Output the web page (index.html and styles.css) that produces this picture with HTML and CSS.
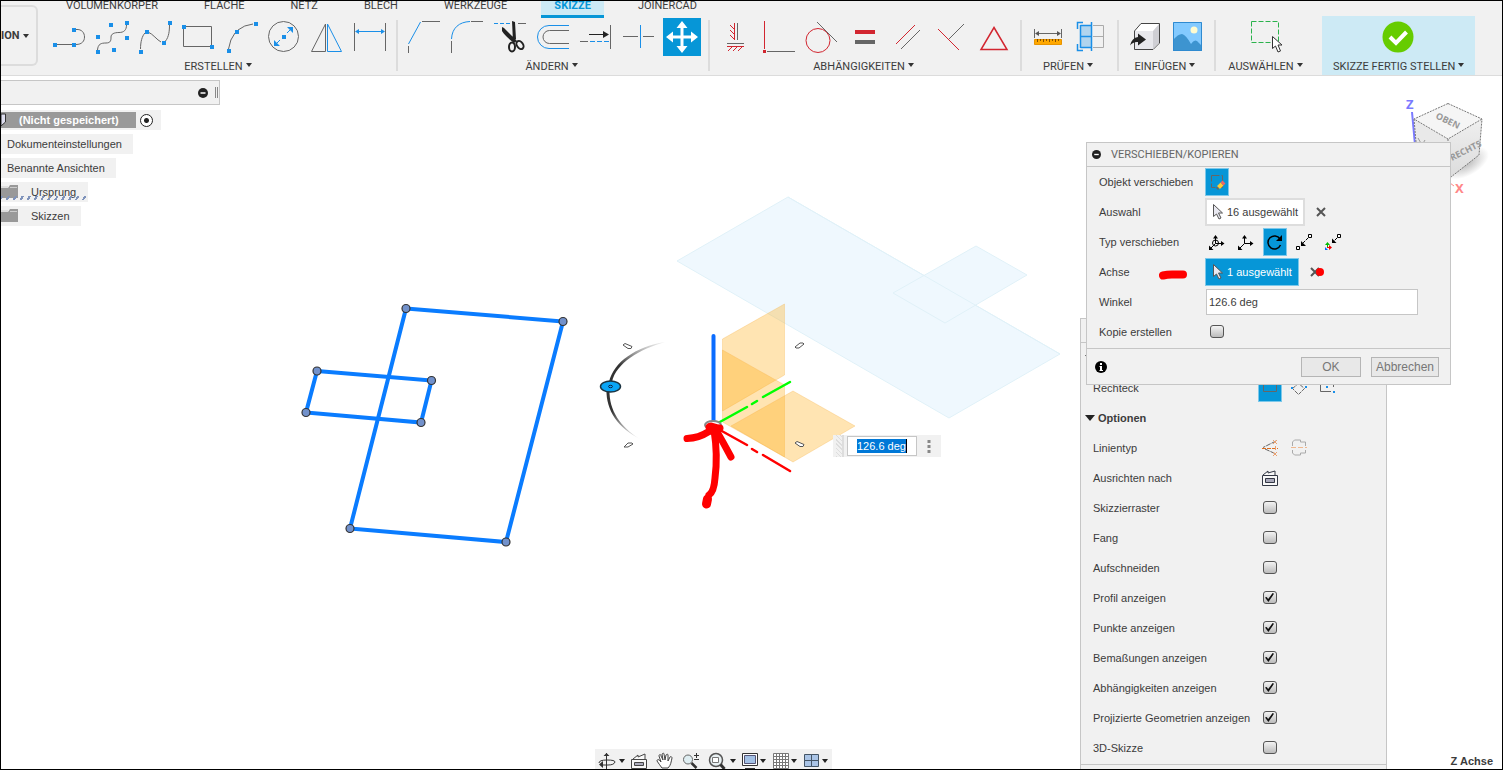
FILE: index.html
```html
<!DOCTYPE html>
<html lang="de">
<head>
<meta charset="utf-8">
<title>Skizze – Verschieben/Kopieren</title>
<link rel="stylesheet" href="styles.css">
</head>
<body>
<div class="app">
  <header class="header">
    <button class="switcher">ION<span class="caret"></span></button>
    <div class="header-main">
      <nav class="tabs">
        <a class="tab" href="#">VOLUMENKÖRPER</a>
        <a class="tab" href="#">FLÄCHE</a>
        <a class="tab" href="#">NETZ</a>
        <a class="tab" href="#">BLECH</a>
        <a class="tab" href="#">WERKZEUGE</a>
        <a class="tab tab-active" href="#">SKIZZE</a>
        <a class="tab" href="#">JOINERCAD</a>
      </nav>
      <div class="ribbon">
        <section class="group">
          <div class="tools">
            <button class="tool" aria-label="Linie"><svg viewBox="48 18 43 38"><path class="g" d="M56 44.500H73M76 29.500C82 29 84.500 33 84.500 37S82 44.500 76 44.500"/><path class="bf" d="M53 43h4v4h-4zM72 43h4v4h-4zM72 28h4v4h-4z"/></svg></button>
            <button class="tool" aria-label="Spline"><svg viewBox="91 18 43 38"><path class="g" d="M97.500 50C98 44 101 43 106 43S111 40 111 37S114 32.500 119 32.500S126.500 30 126.500 25"/><path class="bf" d="M96 35h4v4h-4zM109 23h4v4h-4zM125 21h4v4h-4zM125 36h4v4h-4zM112 48h4v4h-4zM96 50h4v4h-4z"/></svg></button>
            <button class="tool" aria-label="Kurve"><svg viewBox="134 18 43 38"><path class="g" d="M140.500 49C140.500 42 142 36 145 33M148 32C153 34 157 40 161 42M165.500 41C169 37 169.500 30 169.500 25"/><path class="bf" d="M139 50h4v4h-4zM145 30h4v4h-4zM162 41h4v4h-4zM168 21h4v4h-4z"/></svg></button>
            <button class="tool" aria-label="Rechteck"><svg viewBox="177 18 43 38"><path class="g" d="M183.500 26.500H211.500V46.500H183.500z"/><path class="bf" d="M182 25h4v4h-4zM210 45h4v4h-4z"/></svg></button>
            <button class="tool" aria-label="Bogen"><svg viewBox="220 18 43 38"><path class="g" d="M228.500 49Q230 39 235 33M238 30Q244 25 253 24"/><path class="bf" d="M227 49h4v4h-4zM235 30h4v4h-4zM254 22h4v4h-4z"/></svg></button>
            <button class="tool" aria-label="Kreis"><svg viewBox="263 18 43 38"><circle class="g" cx="283.500" cy="36.500" r="15"/><path class="b" d="M276 44l4-4M287 33l4-4"/><path class="bf" d="M282 35h4v4h-4zM274 46v-6l6 6zM293 27v6l-6-6z"/></svg></button>
            <button class="tool" aria-label="Spiegeln"><svg viewBox="306 18 43 38"><path class="g" d="M325.500 24V51.500H311.500z"/><path class="b" d="M327.500 24V51.500H341.500z"/></svg></button>
            <button class="tool" aria-label="Bemaßung"><svg viewBox="349 18 43 38"><path class="g" d="M354.500 23V51M385.500 23V51"/><path class="b" d="M357 31.500H383"/><path class="bf" d="M355 31.500l4-2.500v5zM385 31.500l-4-2.500v5z"/></svg></button>
          </div>
          <button class="group-label">ERSTELLEN<span class="caret"></span></button>
        </section>
        <section class="group">
          <div class="tools">
            <button class="tool" aria-label="Fase"><svg viewBox="403 18 43 38"><path class="g" d="M408.500 53V46M422 21.500H440"/><path class="b" d="M408.500 44L420.500 22"/></svg></button>
            <button class="tool" aria-label="Abrundung"><svg viewBox="446 18 43 38"><path class="g" d="M451.500 53V41M471 21.500H483"/><path class="b" d="M451.500 39C452 28 459 22 470 21.500"/></svg></button>
            <button class="tool" aria-label="Stutzen"><svg viewBox="489 18 43 38"><path class="b" stroke-dasharray="4 2" d="M494 23.500H511"/><path class="g" d="M518 23.500H526"/><path class="k" d="M512 21l3 1 1 17-3 3zM502 27l2 1 13 13-3 2q-9-7-12-12z"/><ellipse class="ring" cx="512" cy="47" rx="3" ry="4.500"/><ellipse class="ring" cx="520" cy="45" rx="3" ry="4.500" transform="rotate(-35 520 45)"/></svg></button>
            <button class="tool" aria-label="Versatz"><svg viewBox="532 18 43 38"><path class="b" d="M569 25.500H549A11.500 11.500 0 0 0 549 48.500H569"/><path class="g" d="M569 30.500H549.500A6.500 6.500 0 0 0 549.500 43.500H569"/></svg></button>
            <button class="tool" aria-label="Dehnen"><svg viewBox="575 18 43 38"><path class="g" d="M580 41.500H588M610.500 25V49"/><path class="b" stroke-dasharray="5 2" d="M590 41.500H609"/><path d="M589 34.500H604" stroke="#222"/><path class="k" d="M603 31l6 3.500-6 3.500z"/></svg></button>
            <button class="tool" aria-label="Bruch"><svg viewBox="618 18 43 38"><path class="g" d="M623 36.500H638M643 36.500H654"/><path class="b" d="M640.500 25V48"/></svg></button>
            <button class="tool tool-active" aria-label="Verschieben/Kopieren"><svg viewBox="661 18 43 38"><path fill="#0696d7" d="M663 18h38v38h-38z"/><path fill="#fff" d="M682 21l5.500 7h-4v7.500h7.500v-4l7 5.500-7 5.500v-4h-7.500V46h4L682 53l-5.500-7h4v-7.500H673v4l-7-5.500 7-5.500v4h7.500V28h-4z"/></svg></button>
          </div>
          <button class="group-label">ÄNDERN<span class="caret"></span></button>
        </section>
        <section class="group">
          <div class="tools">
            <button class="tool" aria-label="Horizontal/Vertikal"><svg viewBox="715 18 43 38"><path class="r" d="M734.500 23V40M734 29l-4-4M734 34l-4-4M734 39l-4-4M727 46.500H744M732 47l-4 4M737 47l-4 4M742 47l-4 4"/><path class="g" d="M737.500 23V40M727 43.500H744"/></svg></button>
            <button class="tool" aria-label="Koinzident"><svg viewBox="758 18 43 38"><path class="r" d="M764.500 21V49"/><path class="rf" d="M763 50h3v3h-3z"/><path class="g" d="M767 51.500H795"/></svg></button>
            <button class="tool" aria-label="Tangential"><svg viewBox="801 18 43 38"><circle class="r" cx="818" cy="40.500" r="12"/><path class="g" d="M817 22L837 42"/></svg></button>
            <button class="tool" aria-label="Gleich"><svg viewBox="844 18 43 38"><path class="rf" d="M855 30h20v4h-20z"/><path fill="#666" d="M855 40h20v4h-20z"/></svg></button>
            <button class="tool" aria-label="Parallel"><svg viewBox="887 18 43 38"><path class="r" d="M896 44L915 25"/><path class="g" d="M901 49L920 30"/></svg></button>
            <button class="tool" aria-label="Lotrecht"><svg viewBox="930 18 43 38"><path class="r" d="M938 29L959 50"/><path class="g" d="M949 39L964 24"/></svg></button>
            <button class="tool" aria-label="Fixieren"><svg viewBox="973 18 43 38"><path class="r" stroke-width="1.500" d="M994 27.500L1007 49.500H981z"/></svg></button>
          </div>
          <button class="group-label">ABHÄNGIGKEITEN<span class="caret"></span></button>
        </section>
        <section class="group">
          <div class="tools">
            <button class="tool" aria-label="Messen"><svg viewBox="1027 18 43 38"><path class="g" d="M1034.500 29V38M1061.500 29V38M1037 33.500H1059"/><path fill="#555" d="M1035 33.500l4-2.500v5zM1061 33.500l-4-2.500v5z"/><path fill="#ffa800" stroke="#e89400" d="M1034.500 39.500h27v5h-27z"/><path d="M1037.500 39v3M1040.500 39v2M1043.500 39v3M1046.500 39v2M1049.500 39v3M1052.500 39v2M1055.500 39v3M1058.500 39v2" stroke="#855000"/></svg></button>
            <button class="tool" aria-label="Prüfen"><svg viewBox="1070 18 43 38"><path fill="#b0d4ee" d="M1080 25h12v23h-12z"/><path class="b" stroke-width="1.500" d="M1083 22.500H1077.500V29M1083 50.500H1077.500V44M1091.500 22V51M1080.500 25.500H1091M1080.500 25V48M1080.500 47.500H1091M1080.500 36.500H1091"/><path class="g light" d="M1093 25.500H1103.500V47.500H1093M1093 36.500H1103"/></svg></button>
          </div>
          <button class="group-label">PRÜFEN<span class="caret"></span></button>
        </section>
        <section class="group">
          <div class="tools">
            <button class="tool" aria-label="Einfügen"><svg viewBox="1124 18 43 38"><path fill="#fff" stroke="#444" d="M1134.500 31L1141 23.500H1159.500V43L1153 49.500H1134.500z"/><path fill="#cfcfd4" d="M1153 31l6-7v19l-6 6z"/><path fill="#e8e8ec" d="M1135 31h18v18h-18z"/><path class="k" d="M1130 45.500q2-8 8-8.500V33.500l8 6-8 6V42q-5-.5-8 3.500z"/></svg></button>
            <button class="tool" aria-label="Bild"><svg viewBox="1167 18 43 38"><path fill="#83caff" d="M1173 22h29v29h-29z"/><circle cx="1194" cy="30" r="3.500" fill="#fffbd0"/><path fill="#3d94d0" d="M1173 40q5-6 9-6 4 1 9 10 3-5 6-3l5 5v5h-29z"/><path fill="none" stroke="#2f8ad0" d="M1173.500 22.500h28v28h-28z"/></svg></button>
          </div>
          <button class="group-label">EINFÜGEN<span class="caret"></span></button>
        </section>
        <section class="group group-select">
          <div class="tools">
            <button class="tool" aria-label="Auswählen"><svg viewBox="1244 18 43 38"><path fill="none" stroke="#2bb24c" stroke-dasharray="5 2" d="M1251.500 21.500h27v21h-27z"/><path fill="#fff" stroke="#333" d="M1272.500 36.500v12l3-2.500 2.500 6 2.500-1-2.500-6h4z"/></svg></button>
          </div>
          <button class="group-label">AUSWÄHLEN<span class="caret"></span></button>
        </section>
        <section class="group group-finish">
          <div class="tools">
            <button class="tool" aria-label="Skizze fertig stellen"><svg viewBox="1377 18 43 38"><circle cx="1398" cy="37" r="15.500" fill="#6c0"/><path d="M1390 37l6 6 10.500-11" fill="none" stroke="#fff" stroke-width="4"/></svg></button>
          </div>
          <button class="group-label">SKIZZE FERTIG STELLEN<span class="caret"></span></button>
        </section>
      </div>
    </div>
  </header>

  <main class="workspace">
    <svg class="canvas" aria-hidden="true">
      <defs>
        <linearGradient id="arcUp" x1="0" y1="1" x2="1" y2="0"><stop offset="0.300" stop-color="#333"/><stop offset="1" stop-color="#ccc" stop-opacity="0.300"/></linearGradient>
        <linearGradient id="arcDown" x1="0" y1="0" x2="1" y2="1"><stop offset="0.300" stop-color="#333"/><stop offset="1" stop-color="#ccc" stop-opacity="0.300"/></linearGradient>
      </defs>
      <g transform="translate(-1 -76)">
        <g fill="#eff8fe" stroke="#e0f1f8">
          <path d="M788 197L1060 354 949 418 677 261z"/>
          <path d="M976 246L1027 275 945 323 893 293z"/>
          <path fill="none" d="M788 197L1060 354"/>
        </g>
        <g fill="#ffa500" fill-opacity="0.300" stroke="#f5b041" stroke-opacity="0.300">
          <path d="M722.500 339L784.500 304V375L722.500 411z"/>
          <path d="M722.500 350L784.500 385V457L722.500 422z"/>
          <path d="M731 426L793 391 855 426 793 462z"/>
        </g>
        <path d="M713.500 336V424" stroke="#0a6cff" stroke-width="4" stroke-linecap="round"/>
        <path d="M718 423L747 407M752 404L757 401M763 397L790 382" stroke="#0f0" stroke-width="2.500" stroke-linecap="round"/>
        <path d="M720 430L747 445M752 449L757 452M763 455L790 471" stroke="#f00" stroke-width="2.500" stroke-linecap="round"/>
        <g fill="none" stroke="#0a7cff" stroke-width="4">
          <path d="M406 308.500L563 321.500 506 542 350 528.500z"/>
          <path d="M317 371L431.500 380.500 421 422.500 306 412.500z"/>
        </g>
        <g fill="#7291cb" stroke="#333" stroke-width="1.200">
          <circle cx="406" cy="308.500" r="4"/><circle cx="563" cy="321.500" r="4"/><circle cx="506" cy="542" r="4"/><circle cx="350" cy="528.500" r="4"/>
          <circle cx="317" cy="371" r="4"/><circle cx="431.500" cy="380.500" r="4"/><circle cx="421" cy="422.500" r="4"/><circle cx="306" cy="412.500" r="4"/>
        </g>
        <path fill="url(#arcUp)" d="M609 382C614 362 635 347 665 342C640 349 616 363 612 382z"/>
        <path fill="url(#arcDown)" d="M606.500 390C606 410 618 428 640 439C620 427 609 410 609.500 390z"/>
        <ellipse cx="610.500" cy="386.500" rx="10" ry="5.500" fill="#0aa5f5" stroke="#1d3542" stroke-width="1.500"/>
        <ellipse cx="610.500" cy="386.500" rx="2" ry="1.200" fill="none" stroke="#124"/>
        <g fill="#fff" stroke="#555">
          <path d="M623 345l2-1.500 7 3-1 2-3 0z"/><path d="M624 447l4-4 4 0 1 1-5 3z"/><path d="M795 347l5-4 3 0 1 1-5 4-3 0z"/><path d="M795 443l2-1.500 7 3-1 2-3 0z"/>
        </g>
        <ellipse cx="713" cy="425" rx="8" ry="4" fill="#fff" stroke="#888" stroke-width="2"/>
        <g fill="none" stroke="#f00" stroke-linecap="round" stroke-linejoin="round">
          <path stroke-width="7" d="M687 438.500Q699 438 708 432Q715 429 720 428M709 427L716 430Q723 442 731 457"/>
          <path stroke-width="7" d="M714 430Q718 455 715 478Q714 492 709 495"/>
          <path stroke-width="9" d="M707.500 499L706.500 504M711 427L718 429"/>
        </g>
      </g>
    </svg>

    <aside class="browser">
      <div class="browser-bar">
        <button class="icon-btn" aria-label="Einklappen"><svg width="10" height="10" viewBox="0 0 10 10"><circle cx="5" cy="5" r="5" fill="#222"/><path d="M2.500 5h5" stroke="#fff" stroke-width="1.500"/></svg></button>
        <span class="grip"></span>
      </div>
      <ul class="tree">
        <li class="node node-root"><span class="doc"><svg width="5" height="14" viewBox="0 0 5 14"><path d="M0 1h4.500v8L0 13z" fill="#dde" stroke="#333"/></svg>(Nicht gespeichert)</span><input class="target" type="radio" checked aria-label="Aktiv"></li>
        <li class="node">Dokumenteinstellungen</li>
        <li class="node">Benannte Ansichten</li>
        <li class="node node-folder node-hatched"><svg class="folder" viewBox="0 0 17 14"><path d="M0 3h7l2-3h8v13H0z" fill="#999"/><path d="M0 2h7M9 2.500h7" stroke="#ccc"/></svg>Ursprung</li>
        <li class="node node-folder"><svg class="folder" viewBox="0 0 17 14"><path d="M0 3h7l2-3h8v13H0z" fill="#999"/><path d="M0 2h7M9 2.500h7" stroke="#ccc"/></svg>Skizzen</li>
      </ul>
    </aside>

    <svg class="viewcube" viewBox="1400 94 98 106" aria-hidden="true">
      <defs>
        <radialGradient id="shadow"><stop offset="0" stop-color="#999" stop-opacity="0.700"/><stop offset="1" stop-color="#999" stop-opacity="0"/></radialGradient>
        <linearGradient id="side" x1="0" y1="0" x2="0" y2="1"><stop offset="0" stop-color="#efefef"/><stop offset="1" stop-color="#dcdcdc"/></linearGradient>
      </defs>
      <ellipse cx="1466" cy="163" rx="25" ry="13" fill="url(#shadow)" transform="rotate(-28 1466 163)"/>
      <path d="M1412 112L1415 145" stroke="#7a7aff" stroke-width="2"/>
      <path d="M1414 119L1448 139 1451 177 1417 155z" fill="#e9e9e9"/>
      <path d="M1448 139L1482 119 1479 155 1451 177z" fill="url(#side)"/>
      <path d="M1448 103.500L1482 119 1448 139 1414 119z" fill="#f5f5f5"/>
      <path d="M1448 103.500L1482 119 1479 155 1451 177M1448 103.500L1414 119 1448 139 1482 119M1448 139V142M1414 119L1416 142" fill="none" stroke="#777" stroke-dasharray="2 1"/>
      <text class="cube-text" transform="translate(1435 118) rotate(26)">OBEN</text>
      <text class="cube-text cube-side" transform="translate(1452 161) rotate(-27)">RECHTS</text>
      <text class="axis axis-z" x="1406" y="109">Z</text>
      <text class="axis axis-x" x="1455" y="193">X</text>
      <path d="M1418 138l4 7 3-5" stroke="#999" fill="none"/>
      <path d="M1450 183l4 3" stroke="#f88"/>
    </svg>

    <div class="value-box">
      <span class="value-grip"></span>
      <label class="value-field"><input class="value-input" aria-label="Winkel" value="126.6 deg"></label>
      <button class="more" aria-label="Mehr"><svg width="4" height="14" viewBox="0 0 4 14"><path d="M0.500 1h3v3h-3zM0.500 6h3v3h-3zM0.500 11h3v3h-3z" fill="#888"/></svg></button>
    </div>

    <section class="panel palette">
      <div class="panel-title"></div>
      <div class="palette-body">
        <div class="section"><span class="disclosure"></span></div>
        <div class="row"><span>Rechteck</span><span class="choices">
          <button class="choice choice-on" aria-label="Zwei Punkte"><svg viewBox="1258 374 24 28"><path class="g" d="M1263.500 380.500h13v11h-13z"/></svg></button>
          <button class="choice" aria-label="Drei Punkte"><svg viewBox="1287 374 24 28"><path class="g" stroke-dasharray="4 1" d="M1292.500 388.500l6-5 6 5-6 6z"/><path class="bf" d="M1291 387h2v2h-2zM1305 386h2v2h-2z"/></svg></button>
          <button class="choice" aria-label="Mittelpunkt"><svg viewBox="1316 374 24 28"><path class="g" d="M1320.500 382V391.500H1331M1333.500 382V387"/><path class="bf" d="M1326 386h2v2h-2zM1333 391h2v2h-2z"/></svg></button>
        </span></div>
        <div class="section"><span class="disclosure"></span>Optionen</div>
        <div class="row"><span>Linientyp</span><span class="choices">
          <button class="choice" aria-label="Konstruktion"><svg viewBox="1258 434 24 28"><path class="g" stroke-dasharray="5 1" d="M1276 441L1263 447.500M1265 449L1276 454"/><path d="M1262 448.500h16" stroke="#e07020" stroke-dasharray="4 1"/><path d="M1273 440l4 4M1277 440l-4 4M1275.500 446v4M1273 452l4 4M1277 452l-4 4" stroke="#e9a070"/></svg></button>
          <button class="choice" aria-label="Mittellinie"><svg viewBox="1287 434 24 28"><path class="g light" d="M1292.500 446v-4l2-2h6v2h5v4M1292.500 450v3l2 2h6v-2h5v-3"/><path d="M1291 447.500h16" stroke="#efb890" stroke-dasharray="5 2"/></svg></button>
        </span></div>
        <div class="row"><span>Ausrichten nach</span><span class="choices">
          <button class="choice" aria-label="Ausrichten nach"><svg viewBox="1258 464 24 28"><path d="M1262.500 475.500h15v10h-15zM1263 475l5-4v2l7-2v4" fill="#f8f8f8" stroke="#333845"/><path d="M1265.500 478.500h9v4h-9z" fill="#aab" stroke="#333845"/></svg></button>
        </span></div>
        <label class="row"><span>Skizzierraster</span><input class="check" type="checkbox"></label>
        <label class="row"><span>Fang</span><input class="check" type="checkbox"></label>
        <label class="row"><span>Aufschneiden</span><input class="check" type="checkbox"></label>
        <label class="row"><span>Profil anzeigen</span><input class="check" type="checkbox" checked></label>
        <label class="row"><span>Punkte anzeigen</span><input class="check" type="checkbox" checked></label>
        <label class="row"><span>Bemaßungen anzeigen</span><input class="check" type="checkbox" checked></label>
        <label class="row"><span>Abhängigkeiten anzeigen</span><input class="check" type="checkbox" checked></label>
        <label class="row"><span>Projizierte Geometrien anzeigen</span><input class="check" type="checkbox" checked></label>
        <label class="row"><span>3D-Skizze</span><input class="check" type="checkbox"></label>
      </div>
      <div class="palette-foot"></div>
    </section>

    <section class="panel dialog">
      <div class="panel-title"><svg width="9" height="9" viewBox="0 0 10 10"><circle cx="5" cy="5" r="5" fill="#222"/><path d="M2.500 5h5" stroke="#fff" stroke-width="1.500"/></svg>VERSCHIEBEN/KOPIEREN</div>
      <div class="dialog-body">
        <div class="row"><span>Objekt verschieben</span><span class="choices">
          <button class="choice choice-on" aria-label="Skizzenobjekte"><svg viewBox="1205 168 24 28"><path class="g" stroke-dasharray="8 2" d="M1211.500 175.500h11v12h-11z"/><path d="M1218.500 187.500l3.500-3.500" stroke="#fc3" stroke-width="4"/><path d="M1222 184l2-2" stroke="#e66" stroke-width="4"/><path d="M1217 189l1-1" stroke="#666" stroke-width="3"/></svg></button>
        </span></div>
        <div class="row"><span>Auswahl</span><span class="choices">
          <button class="select-btn"><svg class="cursor" viewBox="0 0 10 16"><path d="M.5.5v12l3-2.500 2.500 5 2-1-2.500-5h4z" fill="#e8e8f0" stroke="#555"/></svg>16 ausgewählt</button>
          <button class="clear" aria-label="Auswahl aufheben"><svg viewBox="0 0 10 10"><path d="M1 1l8 8M9 1L1 9" stroke="#555" stroke-width="2"/></svg></button>
        </span></div>
        <div class="row"><span>Typ verschieben</span><span class="choices">
          <button class="choice" aria-label="Freies Verschieben"><svg viewBox="1205 228 24 28"><g stroke="#000" fill="none"><path d="M1215.500 237V243.500H1222M1215.500 243.500L1211 248"/><circle cx="1215.500" cy="243" r="3"/></g><path d="M1213 238.500l2.500-3.500 2.500 3.500zM1221 241l3.500 2.500-3.500 2.500zM1209 250v-4.500l4.500 4.500z"/></svg></button>
          <button class="choice" aria-label="Übersetzen"><svg viewBox="1234 228 24 28"><path d="M1244.500 237V243.500H1251M1244.500 243.500L1240 248" stroke="#000" fill="none"/><path d="M1242 238.500l2.500-3.500 2.500 3.500zM1250 241l3.500 2.500-3.500 2.500zM1238 250v-4.500l4.500 4.500z"/></svg></button>
          <button class="choice choice-on" aria-label="Drehen"><svg viewBox="1263 228 24 28"><path d="M1280 239A6.500 6.500 0 1 0 1280.500 245" stroke="#000" stroke-width="1.500" fill="none"/><path d="M1282 235v6h-6z"/></svg></button>
          <button class="choice" aria-label="Punkt zu Punkt"><svg viewBox="1292 228 24 28"><path d="M1308 238l-6 6" stroke="#000" stroke-dasharray="3 1"/><path d="M1301 241v5h5z"/><path d="M1296.500 246.500h3v3h-3zM1308.500 234.500h3v3h-3z" fill="#fff" stroke="#000"/></svg></button>
          <button class="choice" aria-label="Punkt zu Position"><svg viewBox="1321 228 24 28"><path d="M1337 238l-4 4" stroke="#000" stroke-dasharray="3 1"/><path d="M1332 238.500v4.500h4.500z"/><path d="M1337.500 234.500h3v3h-3z" fill="#fff" stroke="#000"/><path d="M1327.500 247v-3" stroke="#0b0"/><path d="M1325 245l2.500-3 2.500 3z" fill="#0b0"/><path d="M1327 247.500h4" stroke="#e00"/><path d="M1329 245l3 2.500-3 2.500z" fill="#e00"/><path d="M1325 250v-3l3 3z" fill="#06f"/></svg></button>
        </span></div>
        <div class="row row-marked"><span>Achse</span><span class="choices">
          <button class="select-btn select-on"><svg class="cursor" viewBox="0 0 10 16"><path d="M.5.5v12l3-2.500 2.500 5 2-1-2.500-5h4z" fill="#e8e8f0" stroke="#555"/></svg>1 ausgewählt</button>
          <button class="clear" aria-label="Auswahl aufheben"><svg viewBox="0 0 10 10"><path d="M1 1l8 8M9 1L1 9" stroke="#555" stroke-width="2"/></svg><span class="dot"></span></button>
        </span><svg class="stroke" viewBox="0 0 28 10"><path d="M4 5.500Q8 4.500 13 4.500H24" fill="none" stroke="#f00" stroke-width="8" stroke-linecap="round"/></svg></div>
        <label class="row"><span>Winkel</span><input class="text-input" value="126.6 deg"></label>
        <label class="row"><span>Kopie erstellen</span><input class="check" type="checkbox"></label>
      </div>
      <div class="dialog-foot">
        <button class="icon-btn info" aria-label="Info"><svg width="12" height="12" viewBox="0 0 12 12"><circle cx="6" cy="6" r="6"/><path d="M5 2h2v2H5zM4.500 5H7v4h1v1H4.500V9H5V6h-.5z" fill="#fff"/></svg></button>
        <button class="btn btn-ok">OK</button>
        <button class="btn">Abbrechen</button>
      </div>
    </section>

    <nav class="navbar">
      <button aria-label="Orbit"><svg width="34" height="20" viewBox="595 749 34 20"><path d="M606.500 753v16M599 763q0-3 8-3t8 2q-1 3-7 3h-6" fill="none" stroke="#333"/><path d="M603.500 756l3-3 3 3M603 761v7l-4-3.500z" fill="#333"/><path class="k" d="M619 759h6l-3 4z"/></svg></button>
      <button aria-label="Ausrichten"><svg width="23" height="20" viewBox="629 749 23 20"><path d="M631.500 759.500h15v9h-15zM633 759l5-4v2l7-3v5" fill="#f8f8f8" stroke="#444"/><path d="M634.500 762.500h9v3h-9z" fill="#aab" stroke="#444"/></svg></button>
      <button aria-label="Pan"><svg width="26" height="20" viewBox="652 749 26 20"><path d="M662 768q-3-4-5-7c0-2 2-2 4 1l-2-6c0-2 2-2 2 0l2 4-1-6c1-1 2-1 2 0l1 6 1-5c1-1 2-1 2 0l0 6 2-4c1-1 2 0 2 1-1 4-1 7-4 10z" fill="#fff" stroke="#444"/></svg></button>
      <button aria-label="Zoom"><svg width="26" height="20" viewBox="678 749 26 20"><circle cx="688" cy="759.500" r="4.500" fill="#dfeef2" stroke="#666"/><path d="M691.500 763l5 5" stroke="#333" stroke-width="2.500"/><path d="M694 755.500h5M696.500 753v5M694 759.500h5" stroke="#333"/></svg></button>
      <button aria-label="Einpassen"><svg width="35" height="20" viewBox="704 749 35 20"><circle cx="716" cy="760" r="6.500" fill="#e8f0f2" stroke="#555" stroke-width="1.500"/><path d="M712.500 757.500h6v5h-6z" fill="#fff" stroke="#777"/><path d="M720.500 764.500l4 4.500" stroke="#333" stroke-width="3"/><path class="k" d="M730 759h6l-3 4z"/></svg></button>
      <button aria-label="Anzeige"><svg width="31" height="20" viewBox="739 749 31 20"><path d="M742.500 753.500h15v12h-15z" fill="#fff" stroke="#333"/><path d="M744.500 755.500h11v8h-11z" fill="#a3c1e6" stroke="#557"/><path d="M745 768.500h10" stroke="#333"/><path class="k" d="M760 759h6l-3 4z"/></svg></button>
      <button aria-label="Raster"><svg width="31" height="20" viewBox="770 749 31 20"><path d="M773.500 753.500h15v15h-15zM776.500 753v16M779.500 753v16M782.500 753v16M785.500 753v16M773 756.500h16M773 759.500h16M773 762.500h16M773 765.500h16" fill="#fff" stroke="#777"/><path class="k" d="M791 759h6l-3 4z"/></svg></button>
      <button aria-label="Ansichtsfenster"><svg width="31" height="20" viewBox="801 749 31 20"><path d="M804.500 754.500h7v6h-7zM811.500 754.500h7v6h-7zM804.500 760.500h7v6h-7zM811.500 760.500h7v6h-7z" fill="#aac4e6" stroke="#456"/><path class="k" d="M822 759h6l-3 4z"/></svg></button>
    </nav>
    <div class="status">Z Achse</div>
  </main>
</div>
</body>
</html>
```
FILE: styles.css
```css
* { box-sizing: border-box; }
body { margin: 0; background: #fff; color: #3c3c3c; font: 11px/14px "Liberation Sans", Arial, sans-serif; }
button { font: inherit; color: inherit; background: none; border: 0; padding: 0; margin: 0; }
svg { display: block; }

.app { display: flex; flex-direction: column; height: 100vh; border: 1px solid #000; overflow: hidden; }

/* Line styles shared by the tool icons */
.g { fill: none; stroke: #666; }
.b { fill: none; stroke: #1a8fe8; }
.r { fill: none; stroke: #d22630; }
.bf { fill: #1a8fe8; }
.rf { fill: #d22630; }
.k { fill: #222; }
.light { stroke: #aaa; }
.ring { fill: none; stroke: #222; stroke-width: 2; }

/* Header */
.header { display: flex; flex: none; background: #f1f1f1; border-bottom: 1px solid #dcdcdc; font-family: Roboto, "Liberation Sans", sans-serif; overflow: hidden; }
.switcher { display: flex; flex: none; align-items: center; width: 37px; height: 61px; margin: 4px 5px 0 0; border: 2px solid #dcdcdc; border-left: 0; border-radius: 0 6px 6px 0; font-weight: 700; }
.caret { display: inline-block; width: 0; margin-left: 3px; border: 3px solid transparent; border-top: 4px solid #333; border-bottom: 0; vertical-align: 3px; }
.header-main { flex: 1; min-width: 0; }
.tabs { display: flex; gap: 22px; padding-left: 11px; line-height: 10px; }
.tab { padding: 0 12px 4px; border-bottom: 3px solid transparent; color: inherit; text-decoration: none; white-space: nowrap; }
.tab-active { padding: 0 13px 4px; background: #cdeaf5; border-color: #0696d7; color: #0696d7; font-weight: 700; }
.ribbon { display: flex; margin-top: -2px; }
.group { flex: none; padding: 2px 6px 0 5px; text-align: center; background: linear-gradient(#dcdcdc, #dcdcdc) right 4px / 2px 51px no-repeat; }
.group-select, .group-finish { background: none; }
.group-select { width: 100px; margin-right: 6px; }
.group-finish { padding: 2px 11px 0; background: #cdeaf5; }
.tools { display: flex; justify-content: center; }
.tool { width: 43px; height: 38px; }
.tool svg { width: 43px; height: 38px; }
.group-label { padding: 2px 4px 0 0; line-height: 17px; white-space: nowrap; }
.group-select .group-label, .group-finish .group-label { padding-right: 0; }

/* Workspace */
.workspace { position: relative; flex: 1; min-height: 0; overflow: hidden; }
.canvas { position: absolute; inset: 0; width: 100%; height: 100%; }

.browser { position: absolute; top: 4px; left: 0; width: 219px; }
.browser-bar { display: flex; align-items: center; justify-content: flex-end; gap: 7px; height: 25px; padding-right: 1px; background: #f1f1f1; border: 1px solid #c6c6c6; border-left: 0; }
.grip { width: 3px; height: 11px; border: solid #888; border-width: 0 1px; }
.tree { display: flex; flex-direction: column; align-items: flex-start; gap: 4px; margin: 5px 0 0; padding: 0; list-style: none; }
.node { display: flex; align-items: center; height: 20px; padding: 0 11px 0 6px; background: #f1f1f1; }
.node-root { padding: 0 8px 0 0; gap: 4px; }
.doc { display: flex; align-items: center; gap: 13px; height: 16px; padding-right: 17px; background: #999; color: #fff; font-weight: 700; }
.target { appearance: none; width: 13px; height: 13px; margin: 0; border: 1px solid #222; border-radius: 50%; background: radial-gradient(circle, #222 0 2px, #fff 3px); }
.node-folder { gap: 13px; }
.node-folder { padding-left: 0; }
.node-hatched { position: relative; padding-right: 12px; }
.node-hatched::after { content: ""; position: absolute; left: 0; right: 2px; bottom: 2px; height: 4px; background: repeating-linear-gradient(120deg, #7f93bb 0 2px, transparent 2px 6px); }
.folder { width: 17px; height: 14px; }

.viewcube { position: absolute; top: 18px; right: 4px; width: 98px; height: 106px; }
.cube-text { font: 700 9px "Open Sans", sans-serif; fill: #999; }
.axis { font: 700 13px "Noto Sans", sans-serif; }
.axis-z { fill: #7a7aff; }
.axis-x { fill: #f88; }

.value-box { position: absolute; top: 359px; left: 832px; display: flex; align-items: center; height: 22px; background: #f1f1f1; }
.value-grip { width: 8px; height: 22px; margin: 0 3px; border-right: 2px solid #ddd; background: repeating-linear-gradient(45deg, #ddd 0 1px, transparent 1px 3px); }
.value-field { height: 20px; padding: 2px 9px; background: #fff; border: 1px solid #c6c6c6; }
.value-input { display: block; width: 50px; height: 14px; padding: 0; border: 0; border-right: 1px solid #000; background: #0078d7; color: #fff; font: inherit; }
.more { display: flex; justify-content: center; width: 24px; }

.panel { position: absolute; background: #f1f1f1; border: 1px solid #c6c6c6; }
.panel-title { display: flex; align-items: center; gap: 10px; height: 24px; padding-left: 5px; border-bottom: 1px solid #c6c6c6; color: #666; font-family: Roboto, "Liberation Sans", sans-serif; }
.row { position: relative; display: grid; grid-template-columns: 165px 1fr; align-items: center; height: 30px; padding-left: 12px; white-space: nowrap; }
.choices { display: flex; align-items: center; gap: 5px; }
.choice { width: 24px; height: 28px; }
.choice svg { width: 24px; height: 28px; }
.choice-on { background: #0696d7; outline: 1px solid #7cc8ea; outline-offset: -1px; }
.check { appearance: none; width: 14px; height: 13px; margin: 0 0 1px 5px; border: 1px solid #555; border-radius: 3px; background: linear-gradient(#f4f4f4, #bbb); }
.check:checked::before { content: ""; display: block; width: 9px; height: 9px; margin: 1px; background: #111; clip-path: polygon(0 50%, 18% 45%, 35% 68%, 85% 0, 100% 8%, 38% 100%); }

.palette { top: 242px; right: 115px; width: 307px; }
.section { display: flex; align-items: center; gap: 3px; height: 30px; padding-left: 4px; font-weight: 700; }
.disclosure { border: 5px solid transparent; border-top: 6px solid #222; border-bottom: 0; }
.palette-foot { height: 30px; border-top: 1px solid #c6c6c6; margin-top: 1px; }

.dialog { top: 66px; right: 51px; width: 365px; }
.dialog-body { padding-bottom: 1px; }
.dialog .row { grid-template-columns: 106px 1fr; }
.select-btn { display: flex; align-items: center; gap: 4px; height: 28px; padding: 0 5px 0 6px; border: 2px solid #ddd; background: #fff; }
.select-on { background: #0696d7; border: 2px solid #0696d7; outline: 1px solid #7cc8ea; outline-offset: -1px; color: #fff; }
.cursor { width: 10px; height: 16px; }
.clear { position: relative; width: 10px; height: 10px; margin-left: 6px; }
.clear svg { width: 10px; height: 10px; }
.dot { position: absolute; top: 1px; left: 6px; width: 8px; height: 8px; border-radius: 50%; background: #f00; }
.stroke { position: absolute; top: 13px; left: 72px; width: 28px; height: 10px; }
.text-input { width: 212px; height: 26px; margin: 0 0 0 1px; padding: 0 2px; border: 1px solid #c6c6c6; background: #fff; color: inherit; font: inherit; }
.dialog-foot { display: flex; align-items: center; gap: 10px; height: 36px; padding: 0 11px 0 8px; border-top: 1px solid #c6c6c6; }
.info { margin-right: auto; }
.btn { height: 20px; padding: 0 4px; border: 1px solid #b5b5b5; background: #e8e8e8; color: #777; font-size: 12px; }
.btn-ok { width: 60px; }

.navbar { position: absolute; left: 594px; bottom: 0; display: flex; height: 20px; background: #f1f1f1; }
.status { position: absolute; right: 9px; bottom: 1px; font-weight: 700; }
```
